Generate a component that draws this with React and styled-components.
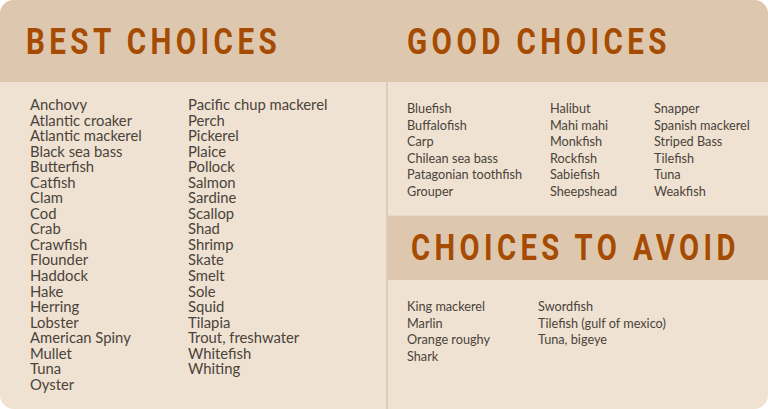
import React from 'react';
import styled, { createGlobalStyle } from 'styled-components';

const GlobalStyle = createGlobalStyle`
  html, body {
    margin: 0;
    padding: 0;
    background: #ffffff;
  }
`;

const Card = styled.div`
  width: 768px;
  height: 409px;
  border-radius: 14px;
  overflow: hidden;
  display: grid;
  grid-template-columns: 388px 380px;
  background: #efe2d2;
  color: #4a423b;
  font-family: 'Source Sans Pro', Lato, 'Open Sans', sans-serif;
`;

const Column = styled.div`
  display: flex;
  flex-direction: column;
`;

const Header = styled.div`
  height: ${(p) => p.h}px;
  background: #ddc8af;
  display: flex;
  align-items: center;
  padding-left: ${(p) => p.pl}px;
  box-sizing: border-box;
  border-top: ${(p) => (p.top ? '1px solid #e8d8c4' : 'none')};
`;

const Title = styled.h2`
  margin: 0;
  font-family: Roboto, 'DejaVu Sans', sans-serif;
  font-weight: 700;
  font-size: ${(p) => p.size || 37}px;
  letter-spacing: 5.5px;
  color: #a64c02;
  line-height: 1;
  white-space: nowrap;
  transform: scaleX(0.8);
  transform-origin: left center;
`;

const Body = styled.div`
  flex: ${(p) => (p.grow ? 1 : 'none')};
  height: ${(p) => (p.h ? `${p.h}px` : 'auto')};
  box-sizing: border-box;
  padding: ${(p) => p.pt}px 0 0 ${(p) => p.pl}px;
  border-right: ${(p) => (p.divider ? '2px solid #e1cdb6' : 'none')};
  display: grid;
  grid-template-columns: ${(p) => p.cols};
  align-content: start;
`;

const List = styled.ul`
  margin: 0;
  padding: 0;
  list-style: none;
  font-size: ${(p) => p.size}px;
  line-height: ${(p) => p.lh}px;
  white-space: nowrap;
`;

const best1 = ['Anchovy', 'Atlantic croaker', 'Atlantic mackerel', 'Black sea bass', 'Butterfish', 'Catfish', 'Clam', 'Cod', 'Crab', 'Crawfish', 'Flounder', 'Haddock', 'Hake', 'Herring', 'Lobster', 'American Spiny', 'Mullet', 'Tuna', 'Oyster'];
const best2 = ['Pacific chup mackerel', 'Perch', 'Pickerel', 'Plaice', 'Pollock', 'Salmon', 'Sardine', 'Scallop', 'Shad', 'Shrimp', 'Skate', 'Smelt', 'Sole', 'Squid', 'Tilapia', 'Trout, freshwater', 'Whitefish', 'Whiting'];

const good = [
  ['Bluefish', 'Buffalofish', 'Carp', 'Chilean sea bass', 'Patagonian toothfish', 'Grouper'],
  ['Halibut', 'Mahi mahi', 'Monkfish', 'Rockfish', 'Sabiefish', 'Sheepshead'],
  ['Snapper', 'Spanish mackerel', 'Striped Bass', 'Tilefish', 'Tuna', 'Weakfish'],
];

const avoid = [
  ['King mackerel', 'Marlin', 'Orange roughy', 'Shark'],
  ['Swordfish', 'Tilefish (gulf of mexico)', 'Tuna, bigeye'],
];

function FishList({ items, size, lh }) {
  return (
    <List size={size} lh={lh}>
      {items.map((f) => <li key={f}>{f}</li>)}
    </List>
  );
}

export default function App() {
  return (
    <>
      <GlobalStyle />
      <Card>
        <Column>
          <Header h={82} pl={26}>
            <Title>BEST CHOICES</Title>
          </Header>
          <Body grow divider pt={15} pl={30} cols="158px auto">
            <FishList items={best1} size={14.8} lh={15.55} />
            <FishList items={best2} size={14.8} lh={15.55} />
          </Body>
        </Column>
        <Column>
          <Header h={82} pl={19}>
            <Title>GOOD CHOICES</Title>
          </Header>
          <Body h={133} pt={18} pl={19} cols="143px 104px auto">
            {good.map((c) => <FishList key={c[0]} items={c} size={12.7} lh={16.5} />)}
          </Body>
          <Header h={65} pl={23} top>
            <Title size={36.5}>CHOICES TO AVOID</Title>
          </Header>
          <Body grow pt={18} pl={19} cols="131px auto">
            {avoid.map((c) => <FishList key={c[0]} items={c} size={12.7} lh={16.5} />)}
          </Body>
        </Column>
      </Card>
    </>
  );
}
